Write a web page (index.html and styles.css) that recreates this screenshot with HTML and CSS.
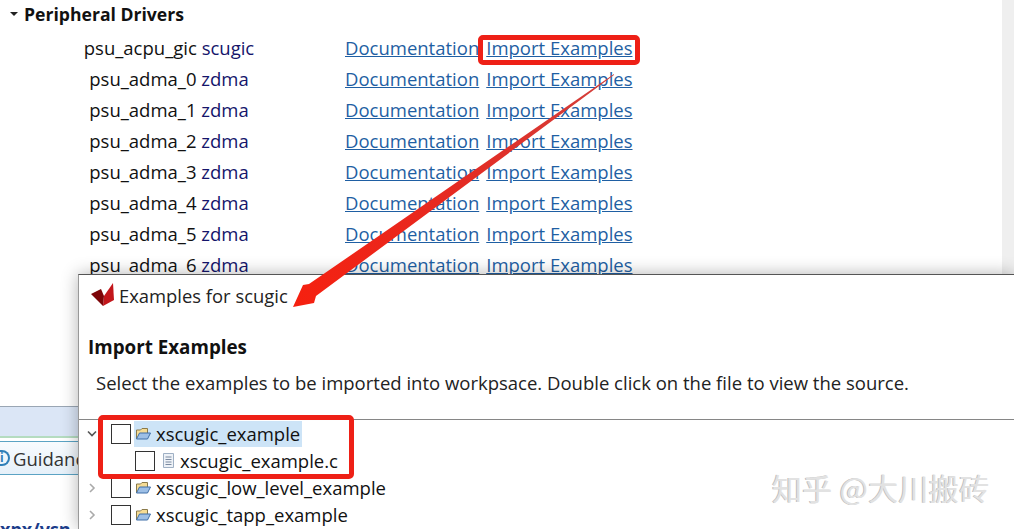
FILE: index.html
```html
<!DOCTYPE html>
<html>
<head>
  <title>Examples for scugic</title>
  <link rel="stylesheet" href="styles.css">
</head>
<body>
  <div class="screen">
    <div class="back-page">
      <div class="drivers">
        <h2 class="drivers-title"><span class="caret"></span>Peripheral Drivers</h2>
        <div class="driver-row">
          <span class="driver-name">psu_acpu_gic <em>scugic</em></span>
          <span class="driver-links"><a>Documentation</a><a>Import Examples</a></span>
        </div>
        <div class="driver-row">
          <span class="driver-name">psu_adma_0 <em>zdma</em></span>
          <span class="driver-links"><a>Documentation</a><a>Import Examples</a></span>
        </div>
        <div class="driver-row">
          <span class="driver-name">psu_adma_1 <em>zdma</em></span>
          <span class="driver-links"><a>Documentation</a><a>Import Examples</a></span>
        </div>
        <div class="driver-row">
          <span class="driver-name">psu_adma_2 <em>zdma</em></span>
          <span class="driver-links"><a>Documentation</a><a>Import Examples</a></span>
        </div>
        <div class="driver-row">
          <span class="driver-name">psu_adma_3 <em>zdma</em></span>
          <span class="driver-links"><a>Documentation</a><a>Import Examples</a></span>
        </div>
        <div class="driver-row">
          <span class="driver-name">psu_adma_4 <em>zdma</em></span>
          <span class="driver-links"><a>Documentation</a><a>Import Examples</a></span>
        </div>
        <div class="driver-row">
          <span class="driver-name">psu_adma_5 <em>zdma</em></span>
          <span class="driver-links"><a>Documentation</a><a>Import Examples</a></span>
        </div>
        <div class="driver-row">
          <span class="driver-name">psu_adma_6 <em>zdma</em></span>
          <span class="driver-links"><a>Documentation</a><a>Import Examples</a></span>
        </div>
      </div>
      <div class="scrollbar"></div>
    </div>

    <div class="side-strip">
      <div class="side-blue"></div>
      <div class="side-tab"><span class="info-icon">i</span>Guidance</div>
      <div class="side-link">xpx/vsn</div>
    </div>

    <div class="dialog">
      <div class="dialog-title">
        <svg class="logo" width="26" height="26" viewBox="0 0 26 26">
          <path d="M14 14 L23 1 L24 18 L13 24 Z" fill="#c2161b"/>
          <path d="M1 12 L11 7 L14 14 L13 24 Z" fill="#7d0508"/>
        </svg>
        <span>Examples for scugic</span>
      </div>
      <div class="dialog-head">
        <h3>Import Examples</h3>
        <p>Select the examples to be imported into workpsace. Double click on the file to view the source.</p>
      </div>
      <div class="tree">
        <div class="tree-row">
          <svg class="twisty" width="10" height="8" viewBox="0 0 10 8"><path d="M1 1.5 L5 5.5 L9 1.5" fill="none" stroke="#555" stroke-width="1.6"/></svg>
          <span class="check"></span>
          <span class="tree-label selected">
            <svg class="folder" width="17" height="14" viewBox="0 0 16 14"><path d="M1 12 V3 H5 L6.5 1.500 H12 V6" fill="#f6dc94" stroke="#8a7a4a"/><path d="M1 12 L4 6 H15 L12 12 Z" fill="#9dbfe6" stroke="#3f6fa8"/></svg>
            xscugic_example
          </span>
        </div>
        <div class="tree-row child">
          <span class="check"></span>
          <span class="tree-label">
            <svg class="file" width="13" height="15" viewBox="0 0 13 15"><path d="M1.500 .5 H11.500 V14.500 H1.500 Z" fill="#eef2f7" stroke="#9fb0c4"/><path d="M3.500 4 H9.500 M3.500 6.500 H9.500 M3.500 9 H9.500 M3.500 11.500 H9.500" stroke="#7b8aa0"/></svg>
            xscugic_example.c
          </span>
        </div>
        <div class="tree-row">
          <svg class="twisty" width="10" height="10" viewBox="0 0 10 10"><path d="M3 1 L7 5 L3 9" fill="none" stroke="#aaa" stroke-width="1.6"/></svg>
          <span class="check"></span>
          <span class="tree-label">
            <svg class="folder" width="17" height="14" viewBox="0 0 16 14"><path d="M1 12 V3 H5 L6.5 1.500 H12 V6" fill="#f6dc94" stroke="#8a7a4a"/><path d="M1 12 L4 6 H15 L12 12 Z" fill="#9dbfe6" stroke="#3f6fa8"/></svg>
            xscugic_low_level_example
          </span>
        </div>
        <div class="tree-row">
          <svg class="twisty" width="10" height="10" viewBox="0 0 10 10"><path d="M3 1 L7 5 L3 9" fill="none" stroke="#aaa" stroke-width="1.6"/></svg>
          <span class="check"></span>
          <span class="tree-label">
            <svg class="folder" width="17" height="14" viewBox="0 0 16 14"><path d="M1 12 V3 H5 L6.5 1.500 H12 V6" fill="#f6dc94" stroke="#8a7a4a"/><path d="M1 12 L4 6 H15 L12 12 Z" fill="#9dbfe6" stroke="#3f6fa8"/></svg>
            xscugic_tapp_example
          </span>
        </div>
      </div>
    </div>

    <div class="mark mark-link"></div>
    <div class="mark mark-tree"></div>

    <svg class="arrow" width="1014" height="529" viewBox="0 0 1014 529">
      <defs>
        <linearGradient id="arrowFill" x1="614" y1="74" x2="293" y2="307" gradientUnits="userSpaceOnUse">
          <stop offset="0" stop-color="#d2403c"/>
          <stop offset="0.5" stop-color="#e52a22"/>
          <stop offset="1" stop-color="#f6200f"/>
        </linearGradient>
      </defs>
      <path d="M614 74 L309 284 L303 285 L293 307 L314 303 L316 296 L614 75 Z" fill="url(#arrowFill)"/>
    </svg>

    <div class="watermark">知乎 @大川搬砖</div>
  </div>
</body>
</html>
```

FILE: styles.css
```css
* {
  box-sizing: border-box;
}

html, body {
  margin: 0;
  padding: 0;
}

body {
  font-family: "Open Sans", "Noto Sans", sans-serif;
  background-color: #fff;
  color: #111;
}

.screen {
  position: relative;
  width: 1014px;
  height: 529px;
  overflow: hidden;
}

/* page behind the dialog */
.back-page {
  display: flex;
  justify-content: space-between;
  height: 275px;
  overflow: hidden;
}

.drivers {
  flex: 1;
  padding-top: 1px;
}

.drivers-title {
  display: flex;
  align-items: center;
  margin: 0 0 5px 0;
  padding-left: 10px;
  height: 26px;
  font-size: 17.6px;
  font-weight: 700;
}

.caret {
  width: 0;
  height: 0;
  margin-right: 6px;
  border-left: 4px solid transparent;
  border-right: 4px solid transparent;
  border-top: 4px solid #222;
}

.driver-row {
  display: flex;
  height: 31px;
  align-items: center;
  font-size: 18.5px;
}

.driver-name {
  width: 345px;
  padding-right: 7px;
  text-align: center;
  white-space: nowrap;
}

.driver-name em {
  font-style: normal;
  color: #15156b;
}

.driver-links {
  display: flex;
  gap: 7px;
}

.driver-links a {
  color: #1f5fa3;
  text-decoration: underline;
  white-space: nowrap;
}

.scrollbar {
  width: 12px;
  background-color: #efefef;
}

/* left edge, bottom */
.side-strip {
  position: absolute;
  left: 0;
  top: 406px;
  width: 80px;
  height: 123px;
  overflow: hidden;
}

.side-blue {
  height: 32px;
  background-color: #dbe6f6;
  border-top: 1px solid #9aa6b4;
  border-bottom: 2px solid #b5dcc0;
}

.side-tab {
  display: flex;
  align-items: center;
  height: 34px;
  margin-top: 3px;
  border-top: 1px solid #5ba3c4;
  border-bottom: 1px solid #5ba3c4;
  background-image: linear-gradient(#f8fbfe, #e6f0f9);
  font-size: 18.5px;
  color: #333;
  white-space: nowrap;
}

.info-icon {
  flex: none;
  width: 10px;
  height: 16px;
  margin-right: 3px;
  border: 2px solid #2f7fb8;
  border-left: none;
  border-radius: 0 8px 8px 0;
  color: #2f7fb8;
  font-size: 12px;
  font-weight: 700;
  line-height: 12px;
  text-align: left;
}

.side-link {
  margin-top: 42px;
  font-size: 18px;
  font-weight: 700;
  line-height: 24px;
  color: #1c3d8a;
  white-space: nowrap;
}

/* dialog */
.dialog {
  position: absolute;
  left: 78px;
  top: 274px;
  width: 936px;
  height: 255px;
  background-color: #fff;
  border-top: 1px solid #555;
  border-left: 1px solid #999;
  box-shadow: 0 0 16px rgba(0, 0, 0, 0.3);
}

.dialog-title {
  display: flex;
  align-items: center;
  gap: 3px;
  height: 40px;
  padding-left: 11px;
  font-size: 18.4px;
  color: #222;
}

.dialog-head {
  height: 105px;
  border-bottom: 1px solid #868686;
}

.dialog-head h3 {
  margin: 0;
  padding: 19px 0 0 9px;
  font-size: 18.8px;
  font-weight: 700;
  line-height: 26px;
}

.dialog-head p {
  margin: 10px 0 0 0;
  padding-left: 17px;
  font-size: 18.5px;
  line-height: 26px;
  color: #222;
  white-space: nowrap;
}

.tree {
  padding: 0 0 0 8px;
  font-size: 18.5px;
}

.tree-row {
  display: flex;
  align-items: center;
  height: 27px;
}

.twisty {
  flex: none;
  width: 10px;
  margin-right: 14px;
}

.check {
  flex: none;
  width: 20px;
  height: 20px;
  margin-right: 3px;
  border: 1px solid #333;
  background-color: #fff;
}

.tree-row.child {
  padding-left: 48px;
}

.tree-label {
  display: flex;
  align-items: center;
  gap: 4px;
  height: 26px;
  padding: 0 2px 0 1px;
  white-space: nowrap;
}

.tree-label.selected {
  background-color: #cde4f7;
}

.tree-row.child .tree-label {
  gap: 5px;
  padding-left: 4px;
}

/* red annotations drawn on the screenshot */
.mark {
  position: absolute;
  border: 5px solid #ee2016;
  border-radius: 5px;
}

.mark-link {
  left: 478px;
  top: 35px;
  width: 162px;
  height: 30px;
}

.mark-tree {
  left: 98px;
  top: 415px;
  width: 256px;
  height: 64px;
}

.arrow {
  position: absolute;
  left: 0;
  top: 0;
}

.watermark {
  position: absolute;
  left: 772px;
  top: 468px;
  font-family: "Noto Sans CJK SC", sans-serif;
  font-size: 30px;
  line-height: 38px;
  letter-spacing: 0.3px;
  color: #e2e2e2;
  text-shadow: -1px 0 0 #bdbdbd;
  white-space: nowrap;
}
```
